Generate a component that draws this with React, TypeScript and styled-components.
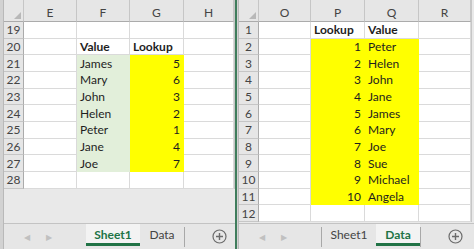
import React from "react";
import styled, { createGlobalStyle } from "styled-components";

const Global = createGlobalStyle`
  html, body { margin: 0; padding: 0; background: #e6e6e6; }
  body { font-family: "Lato", "Liberation Sans", sans-serif; }
`;

type Fill = "yellow" | "green" | undefined;

type CellData = {
  text?: string | number;
  bold?: boolean;
  right?: boolean;
  fill?: Fill;
};

type SheetProps = {
  letters: string[];
  widths: number[];
  rowHeader: number;
  firstRow: number;
  rows: CellData[][];
  active: "Sheet1" | "Data";
  gridHeight: number;
  firstTabGap: number;
  showSeparator?: boolean;
  plusGap: number;
};

const fills: Record<string, string> = {
  yellow: "#ffff00",
  green: "#e2efda",
};

const Page = styled.div`
  display: flex;
  width: 474px;
  height: 249px;
  overflow: hidden;
`;

const Window = styled.div<{ $w: number }>`
  display: flex;
  flex-direction: column;
  width: ${(p) => p.$w}px;
  height: 249px;
  background: #e9e9e9;
`;

const Divider = styled.div`
  width: 2px;
  background: #3f7d5c;
`;

const Body = styled.div`
  display: flex;
  flex: 1;
  min-height: 0;
`;

const Strip = styled.div<{ $w: number }>`
  width: ${(p) => p.$w}px;
  background: #d2d2d2;
  border-right: 1px solid #b9b9b9;
  box-sizing: border-box;
`;

const SheetArea = styled.div`
  flex: 1;
  display: flex;
  flex-direction: column;
  background: #e9e9e9;
`;

const Grid = styled.div<{ $cols: string; $rows: number }>`
  display: grid;
  width: max-content;
  grid-template-columns: ${(p) => p.$cols};
  grid-template-rows: 22px repeat(${(p) => p.$rows}, 16.67px);
  background: #fff;
  border-right: 1px solid #c6c6c6;
`;

const Corner = styled.div`
  background: #e6e6e6;
  border-right: 1px solid #c6c6c6;
  border-bottom: 1px solid #ababab;
  position: relative;
  &::after {
    content: "";
    position: absolute;
    right: 2px;
    bottom: 2px;
    border-left: 7px solid transparent;
    border-bottom: 7px solid #b8b8b8;
  }
`;

const ColHead = styled.div`
  background: #e6e6e6;
  border-right: 1px solid #c6c6c6;
  border-bottom: 1px solid #ababab;
  display: flex;
  align-items: center;
  justify-content: center;
  font-size: 12px;
  color: #444;
  padding-top: 3px;
  box-sizing: border-box;
`;

const RowHead = styled.div`
  background: #e6e6e6;
  border-right: 1px solid #ababab;
  border-bottom: 1px solid #c6c6c6;
  display: flex;
  align-items: center;
  justify-content: center;
  font-size: 12px;
  color: #444;
  box-sizing: border-box;
`;

const Cell = styled.div<{ $fill?: Fill; $bold?: boolean; $right?: boolean }>`
  background: ${(p) => (p.$fill ? fills[p.$fill] : "#fff")};
  border-right: 1px solid ${(p) => (p.$fill ? fills[p.$fill] : "#dadada")};
  border-bottom: 1px solid ${(p) => (p.$fill ? fills[p.$fill] : "#dadada")};
  box-sizing: border-box;
  display: flex;
  align-items: center;
  justify-content: ${(p) => (p.$right ? "flex-end" : "flex-start")};
  padding: 0 3px;
  font-size: 12px;
  font-weight: ${(p) => (p.$bold ? 700 : 400)};
  color: #1e1e1e;
  white-space: nowrap;
`;

const Filler = styled.div`
  flex: 1;
`;

const TabBar = styled.div`
  height: 25px;
  border-top: 1px solid #c3c3c3;
  background: #e6e6e6;
  display: flex;
  align-items: stretch;
`;

const Arrows = styled.div<{ $w: number }>`
  width: ${(p) => p.$w}px;
  display: flex;
  align-items: center;
  gap: 16px;
  padding-left: 20px;
  box-sizing: border-box;
  color: #c0c0c0;
  font-size: 8px;
`;

const Sep = styled.div`
  width: 1px;
  margin: 3px 0 2px;
  background: #a8a8a8;
`;

const Tab = styled.div<{ $active?: boolean; $w: number }>`
  width: ${(p) => p.$w}px;
  display: flex;
  align-items: center;
  justify-content: center;
  font-size: 12px;
  font-weight: ${(p) => (p.$active ? 700 : 400)};
  color: ${(p) => (p.$active ? "#217346" : "#444")};
  background: ${(p) => (p.$active ? "#f3f3f3" : "transparent")};
  border-bottom: 3px solid ${(p) => (p.$active ? "#217346" : "transparent")};
  margin-bottom: 3px;
  box-sizing: border-box;
  padding-top: 2px;
`;

const Plus = styled.div<{ $gap: number }>`
  margin-left: ${(p) => p.$gap}px;
  display: flex;
  align-items: center;
`;

const PlusIcon = () => (
  <svg width="15" height="15" viewBox="0 0 15 15">
    <circle cx="7.5" cy="7.5" r="6.5" fill="none" stroke="#6b6b6b" strokeWidth="1.2" />
    <path d="M7.5 4v7M4 7.5h7" stroke="#6b6b6b" strokeWidth="1.4" />
  </svg>
);

const Sheet: React.FC<SheetProps> = (props) => {
  const cols = [props.rowHeader, ...props.widths].map((w) => `${w}px`).join(" ");
  return (
    <SheetArea>
      <Grid $cols={cols} $rows={props.rows.length} style={{ height: props.gridHeight }}>
        <Corner />
        {props.letters.map((l) => (
          <ColHead key={l}>{l}</ColHead>
        ))}
        {props.rows.map((row, i) => (
          <React.Fragment key={i}>
            <RowHead>{props.firstRow + i}</RowHead>
            {props.letters.map((l, j) => {
              const c = row[j] || {};
              return (
                <Cell key={l} $fill={c.fill} $bold={c.bold} $right={c.right}>
                  {c.text}
                </Cell>
              );
            })}
          </React.Fragment>
        ))}
      </Grid>
      <Filler />
      <TabBar>
        <Arrows $w={props.firstTabGap}>
          <span>◀</span>
          <span>▶</span>
        </Arrows>
        {props.showSeparator && <Sep />}
        <Tab $w={54} $active={props.active === "Sheet1"}>Sheet1</Tab>
        <Tab $w={44} $active={props.active === "Data"}>Data</Tab>
        <Sep />
        <Plus $gap={props.plusGap}>
          <PlusIcon />
        </Plus>
      </TabBar>
    </SheetArea>
  );
};

const names = ["James", "Mary", "John", "Helen", "Peter", "Jane", "Joe"];
const lookups = [5, 6, 3, 2, 1, 4, 7];

const leftRows: CellData[][] = [
  [],
  [{}, { text: "Value", bold: true }, { text: "Lookup", bold: true }],
  ...names.map((n, i) => [
    {},
    { text: n, fill: "green" as Fill },
    { text: lookups[i], right: true, fill: "yellow" as Fill },
  ]),
  [],
];

const dataNames = ["Peter", "Helen", "John", "Jane", "James", "Mary", "Joe", "Sue", "Michael", "Angela"];

const rightRows: CellData[][] = [
  [{}, { text: "Lookup", bold: true }, { text: "Value", bold: true }],
  ...dataNames.map((n, i) => [
    {},
    { text: i + 1, right: true, fill: "yellow" as Fill },
    { text: n, fill: "yellow" as Fill },
  ]),
  [],
];

export default function App() {
  return (
    <Page>
      <Global />
      <Window $w={235}>
        <Body>
          <Strip $w={5} />
          <Sheet
            letters={["E", "F", "G", "H"]}
            widths={[53, 53, 54, 50]}
            rowHeader={20}
            firstRow={19}
            rows={leftRows}
            active="Sheet1"
            gridHeight={189}
            firstTabGap={82}
            plusGap={27}
          />
        </Body>
      </Window>
      <Divider />
      <Window $w={237}>
        <Body>
          <Strip $w={2} />
          <Sheet
            letters={["O", "P", "Q", "R"]}
            widths={[52, 54, 54, 52]}
            rowHeader={20}
            firstRow={1}
            rows={rightRows}
            active="Data"
            gridHeight={222}
            firstTabGap={82}
            showSeparator
            plusGap={27}
          />
        </Body>
      </Window>
    </Page>
  );
}
